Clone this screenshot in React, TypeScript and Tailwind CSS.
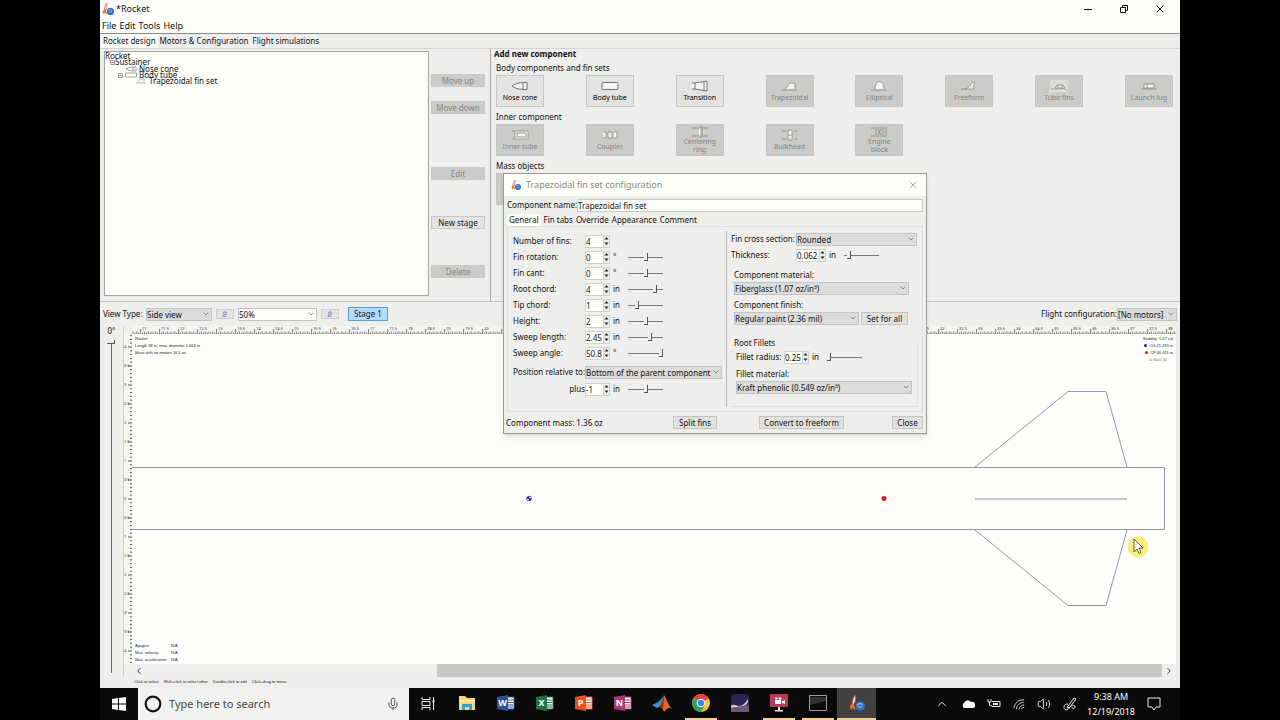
import React from 'react';
import { ChevronDown, ChevronLeft, ChevronRight, ChevronUp, Mic, Volume2, X } from 'lucide-react';

interface FieldProps {
  label: string;
  value: string;
  unit?: string;
  slider?: number;
  labelClass?: string;
  inputClass?: string;
}

interface DropDownProps {
  label: string;
  value: string;
  className?: string;
}

const finFields: FieldProps[] = [
  { label: 'Number of fins:', value: '4' },
  { label: 'Fin rotation:', value: '0', unit: '°', slider: 50 },
  { label: 'Fin cant:', value: '0', unit: '°', slider: 50 },
  { label: 'Root chord:', value: '4', unit: 'in', slider: 80 },
  { label: 'Tip chord:', value: '1', unit: 'in', slider: 22 },
  { label: 'Height:', value: '2', unit: 'in', slider: 50 },
  { label: 'Sweep length:', value: '2.45', unit: 'in', slider: 64 },
  { label: 'Sweep angle:', value: '50.8', unit: '°', slider: 100 },
];

function AppIcon({ className = '' }: { className?: string }) {
  return (
    <svg viewBox="0 0 20 20" className={className} aria-hidden="true">
      <path d="M8 0c1 4 0 8-2 12H4C4 7 5 3 8 0z" fill="#efe6e0" stroke="#c8452d" strokeWidth="1" />
      <path d="M4 10l-3 4 2 5 2-3 2 3 1-2-2-6z" fill="#e8742c" />
      <circle cx="14" cy="14" r="6" fill="#2d6fc0" />
      <path d="M10 13c2-3 6-3 7 0M11 15h6" stroke="#9cc8f2" strokeWidth="1.4" fill="none" />
    </svg>
  );
}

function DropDown({ label, value, className = '' }: DropDownProps) {
  return (
    <div className={`relative h-[13px] ${className}`}>
      <select
        aria-label={label}
        defaultValue={value}
        className="block h-full w-full appearance-none border border-[#c2c2c0] bg-inherit leading-[11px] outline-none"
      >
        <option>{value}</option>
      </select>
      <ChevronDown className="pointer-events-none absolute top-0.5 right-0.5 h-2 w-2 text-[#555]" strokeWidth={2} />
    </div>
  );
}

function Slider({ label, value }: { label: string; value: number }) {
  return (
    <input
      type="range"
      aria-label={`${label} slider`}
      defaultValue={value}
      className="h-3 w-[35px] appearance-none bg-transparent [&::-webkit-slider-runnable-track]:h-px [&::-webkit-slider-runnable-track]:bg-[#777] [&::-webkit-slider-thumb]:-mt-1 [&::-webkit-slider-thumb]:h-2 [&::-webkit-slider-thumb]:w-1 [&::-webkit-slider-thumb]:appearance-none [&::-webkit-slider-thumb]:border-r [&::-webkit-slider-thumb]:border-b [&::-webkit-slider-thumb]:border-[#555] [&::-webkit-slider-thumb]:bg-[#eeeeec]"
    />
  );
}

function NumberField({ label, value, unit, slider, labelClass = 'w-[72px]', inputClass = 'w-[18px]' }: FieldProps) {
  const id = label.toLowerCase().replace(/[^a-z]+/g, '-');
  return (
    <div className="flex h-4 items-center">
      <label htmlFor={id} className={`shrink-0 whitespace-nowrap ${labelClass}`}>{label}</label>
      <input id={id} defaultValue={value} className={`h-[13px] border border-r-0 border-[#d0d0ce] bg-[#fdfefa] outline-none ${inputClass}`} />
      <button aria-label={`${label} step`} className="flex h-[13px] w-[7px] items-center justify-center border border-[#d0d0ce]">
        <svg viewBox="0 0 5 10" className="h-2.5 w-[5px]">
          <path d="M.5 3.500l2-2.500 2 2.500zM.5 6.500l2 2.500 2-2.500z" fill="#222" />
        </svg>
      </button>
      <span className="w-[18px] shrink-0 pl-[3px]">{unit}</span>
      {slider !== undefined && <Slider label={label} value={slider} />}
    </div>
  );
}

/* Component palette */

const glyphs: Record<string, React.ReactNode> = {
  'Nose cone': <path d="M1 6c4-3 8-3.500 15-3.500v7C9 9.500 5 9 1 6zM12 2.500v7" />,
  'Body tube': <rect x="1" y="2.500" width="16" height="7" rx="1" />,
  Transition: <path d="M1 3h3l12-2v10L4 9H1M4 3v6M13 1.500v9" />,
  Trapezoidal: <path d="M1 10h15M4 10l5-7h5v6" />,
  Elliptical: <path d="M1 10h16M5 9c0-10 9-10 9 0" />,
  Freeform: <path d="M1 9h14M5 9c5-1 6-7 10-7l-2 5 1 2" />,
  'Tube fins': <path d="M1 9h14l2 2M5 8l2-3h6l2 3zM8 5v3M12 5v3" />,
  'Launch lug': <path d="M1 9h16M4 4h10v4H4zM7 4v4" />,
  'Inner tube': <path d="M4 2h13v8H4zM6 4h9v4H6zM1 2h2M1 10h2" />,
  Coupler: <path d="M2 3h3v6H2M7 3h4v6H7zM13 3h3v6h-3" />,
  'Centering ring': <path d="M1 2h16M1 10h16M8 1h3v10H8M10 3v6" />,
  Bulkhead: <path d="M1 2h4M1 10h4M13 2h4M13 10h4M7 1h4v10H7zM7 6h4" />,
  'Engine block': <path d="M1 2h16M1 10h16M8 3l3 6M11 3L8 9M13 3v6M16 3v6M6 3v6" />,
};

function PartButton({ name, enabled = false }: { name: string; enabled?: boolean }) {
  const twoLines = name.endsWith('ring') || name.endsWith('block');
  return (
    <button
      disabled={!enabled}
      className={`flex h-8 w-12 flex-col items-center justify-center border border-[#c4c4c2] text-[7px] leading-[8px] ${
        enabled ? 'bg-[#e3e3e1] text-black' : 'bg-[#cbcbc9] text-[#858583]'
      } ${twoLines ? 'px-2' : ''}`}
    >
      <svg
        viewBox="0 0 18 12"
        className={`shrink-0 ${twoLines ? 'h-3 w-[18px]' : 'mb-0.5 h-3 w-[18px]'} ${name === 'Tube fins' ? 'bg-[#dcdcda]' : ''}`}
        fill="#f4f4f2"
        stroke={enabled ? '#555' : '#858583'}
        strokeWidth="0.800"
      >
        {glyphs[name]}
      </svg>
      {name}
    </button>
  );
}

const partGrid = 'grid grid-cols-[repeat(8,48px)] justify-between';

function ComponentPalette() {
  return (
    <section className="flex min-w-0 flex-1 flex-col border-l border-[#a5a5a3] pr-[7px] pl-[5px]">
      <h2 className="-ml-0.5 h-3 leading-[10px] font-bold">Add new component</h2>
      <h3 className="mt-px h-[13px] leading-[12px]">Body components and fin sets</h3>
      <div className={partGrid}>
        {['Nose cone', 'Body tube', 'Transition'].map(n => <PartButton key={n} name={n} enabled />)}
        {['Trapezoidal', 'Elliptical', 'Freeform', 'Tube fins', 'Launch lug'].map(n => <PartButton key={n} name={n} />)}
      </div>
      <h3 className="mt-1 h-[13px] leading-[12px]">Inner component</h3>
      <div className={partGrid}>
        {['Inner tube', 'Coupler', 'Centering ring', 'Bulkhead', 'Engine block'].map(n => <PartButton key={n} name={n} />)}
      </div>
      <h3 className="mt-1 h-[13px] leading-[12px]">Mass objects</h3>
      <button disabled aria-label="Mass component" className="h-8 w-12 border border-[#c4c4c2] bg-[#cbcbc9]" />
    </section>
  );
}

function ComponentTree() {
  return (
    <ul className="min-w-0 flex-1 border border-[#a5a5a3] bg-[#fdfefa] pt-px leading-[6px] whitespace-nowrap">
      <li className="h-1.5">Rocket</li>
      <li className="flex h-1.5 items-center pl-[5px]">
        <TreeBox />Sustainer
      </li>
      <li className="flex h-[7px] items-center gap-0.5 pl-5">
        <svg viewBox="0 0 12 6" className="h-1.5 w-3" fill="none" stroke="#888" strokeWidth="0.800"><path d="M1 3c3-2 6-2 10-2v4C7 5 4 5 1 3zM8 1v4" /></svg>
        Nose cone
      </li>
      <li className="flex h-1.5 items-center gap-0.5 pl-[13px]">
        <TreeBox />
        <svg viewBox="0 0 12 6" className="h-1.5 w-3" fill="none" stroke="#888" strokeWidth="0.800"><path d="M.5 1h11v4H.5z" /></svg>
        Body tube
      </li>
      <li className="flex h-1.5 items-center gap-0.5 pl-[30px]">
        <svg viewBox="0 0 12 6" className="h-1.5 w-3" fill="none" stroke="#aaa" strokeWidth="0.800"><path d="M1 5h10M3 5l2-4h4v4" /></svg>
        Trapezoidal fin set
      </li>
    </ul>
  );
}

function TreeBox() {
  return (
    <svg viewBox="0 0 5 5" className="h-[5px] w-[5px] shrink-0" fill="none" stroke="#888" strokeWidth="0.800"><path d="M.5.5h4v4h-4zM1 2.500h3" /></svg>
  );
}

const sideButton = 'h-[13px] w-[54px] border border-[#c8c8c6] leading-[11px] disabled:bg-[#cbcbc9] disabled:text-[#858583]';

/* Rocket drawing */

const PX_PER_INCH = 38;

function TopRuler() {
  return (
    <svg viewBox="0 0 1044 8" preserveAspectRatio="xMinYMin slice" className="h-2 w-full shrink-0 bg-[#f4f4f1]">
      {Array.from({ length: 556 }, (_, i) => {
        const x = 1 + (i / 20) * PX_PER_INCH;
        const major = i % 10 === 4;
        return <path key={i} d={`M${x} 8V${major ? 3 : i % 2 ? 6.5 : 5.5}`} stroke="#444" strokeWidth="0.700" />;
      })}
      {Array.from({ length: 55 }, (_, i) => (
        <text key={i} x={10 + i * 19} y="4" fontSize="4" fill="#333">{11 + i / 2}</text>
      ))}
    </svg>
  );
}

function SideRuler() {
  return (
    <svg viewBox="0 0 8 330" preserveAspectRatio="xMinYMin slice" className="h-full w-2 shrink-0 bg-[#f4f4f1]">
      {Array.from({ length: 87 }, (_, i) => (
        <path key={i} d={`M8 ${1.6 + i * 3.8}H${i % 5 === 3 ? 4 : 6}`} stroke="#333" strokeWidth="0.800" />
      ))}
      {Array.from({ length: 17 }, (_, i) => (
        <text key={i} x="0" y={14 + i * 19} fontSize="4" fill="#333">{Math.abs(4 - i / 2)}</text>
      ))}
    </svg>
  );
}

function RocketCanvas() {
  return (
    <div className="relative min-w-0 flex-1 bg-[#fdfefa] font-['Liberation_Sans',sans-serif] text-[4px] leading-[7px]">
      <svg viewBox="0 0 1044 330" preserveAspectRatio="xMinYMid meet" className="block h-full w-full" fill="none" stroke="#9494b8">
        <path d="M0 133.500H1032.500V195.500H0" />
        <path d="M843 133L936 57.500H974L995 133M843 196L936 271.500H974L995 196M843 165H995" />
        <circle cx="397" cy="164.500" r="2.500" fill="#1818b0" stroke="none" />
        <path d="M397 162a2.500 2.500 0 0 1 2.500 2.500H397zM397 167a2.500 2.500 0 0 1-2.500-2.500h2.500z" fill="#fff" stroke="#1818b0" strokeWidth="0.500" />
        <circle cx="752" cy="164.500" r="2.300" fill="#d81818" stroke="#d81818" strokeWidth="0.500" />
        <circle cx="1006" cy="213" r="10.500" fill="#f5ef7c" stroke="none" />
        <path d="M1002 205v13l3-3 2 4.500 2-1-2-4.500h4z" fill="#fff" stroke="#333" strokeWidth="0.800" />
      </svg>
      <div className="absolute top-px left-[3px] text-[#222]">
        <p>Rocket</p>
        <p>Length 38 in, max. diameter 1.664 in</p>
        <p>Mass with no motors 16.5 oz</p>
      </div>
      <div className="absolute top-px right-[3px] text-right text-[#222]">
        <p>Stability: 5.67 cal</p>
        <p><span className="mr-0.5 inline-block h-[3px] w-[3px] rounded-full bg-[#1818b0]" />CG:21.233 in</p>
        <p><span className="mr-0.5 inline-block h-[3px] w-[3px] rounded-full bg-[#d81818]" />CP:30.611 in</p>
        <p className="pr-1.5 text-[#777]">at M=0.30</p>
      </div>
      <dl className="absolute bottom-px left-[3px] grid grid-cols-[36px_auto] text-[#202060]">
        <dt>Apogee:</dt><dd>N/A</dd>
        <dt>Max. velocity:</dt><dd>N/A</dd>
        <dt className="whitespace-nowrap">Max. acceleration:</dt><dd>N/A</dd>
      </dl>
    </div>
  );
}

function ZoomButton({ label }: { label: string }) {
  return (
    <button aria-label={label} className="mx-1 flex h-2.5 w-[18px] items-center justify-center border border-[#d0d0ce] bg-[#e3e3e1]">
      <svg viewBox="0 0 8 8" className="h-1.5 w-1.5" fill="#cfd6f2" stroke="#6a6fa8"><circle cx="4" cy="3" r="2" /><path d="M3 5L1 7h5" /></svg>
    </button>
  );
}

function RocketView() {
  return (
    <main className="flex min-h-0 flex-1 flex-col border-t border-[#c4c4c2]">
      <div className="flex h-6 shrink-0 items-center px-[3px]">
        <span className="w-[43px]">View Type:</span>
        <DropDown label="View type" value="Side view" className="w-[66px] bg-[#dcdcda]" />
        <ZoomButton label="Zoom out" />
        <DropDown label="Zoom" value="50%" className="w-[79px] bg-[#fdfefa]" />
        <ZoomButton label="Zoom in" />
        <button className="ml-[5px] h-3.5 w-10 border border-[#5f9fd0] bg-[#b4dcfa] leading-[12px]">Stage 1</button>
        <span className="ml-auto">Flight configuration:</span>
        <DropDown label="Flight configuration" value="[No motors]" className="w-[60px] bg-[#dcdcda]" />
      </div>
      <div className="flex min-h-0 flex-1">
        <div className="flex w-[23px] shrink-0 flex-col items-center pb-1">
          <label htmlFor="roll" className="h-3.5 leading-[10px]">0°</label>
          <input
            id="roll"
            type="range"
            defaultValue={0}
            className="min-h-0 w-3 flex-1 appearance-none bg-transparent [writing-mode:vertical-lr] [&::-webkit-slider-runnable-track]:w-px [&::-webkit-slider-runnable-track]:bg-[#666] [&::-webkit-slider-thumb]:-ml-1 [&::-webkit-slider-thumb]:h-1 [&::-webkit-slider-thumb]:w-2 [&::-webkit-slider-thumb]:appearance-none [&::-webkit-slider-thumb]:border-r [&::-webkit-slider-thumb]:border-b [&::-webkit-slider-thumb]:border-[#555] [&::-webkit-slider-thumb]:bg-[#eeeeec]"
          />
        </div>
        <div className="mr-1 flex min-w-0 flex-1 flex-col border-l border-[#d0d0ce]">
          <div className="pl-2"><TopRuler /></div>
          <div className="flex min-h-0 flex-1">
            <SideRuler />
            <RocketCanvas />
          </div>
          <div className="flex h-[13px] shrink-0 items-center bg-[#efefed] pl-2.5">
            <button aria-label="Scroll left"><ChevronLeft className="h-2.5 w-2.5" /></button>
            <div className="h-full flex-1 pl-[293px]"><div className="h-full bg-[#c8c8c6]" /></div>
            <button aria-label="Scroll right" className="px-0.5"><ChevronRight className="h-2.5 w-2.5" /></button>
          </div>
        </div>
      </div>
      <div className="flex h-[11px] shrink-0 gap-[5px] pl-[34px] font-['Liberation_Sans',sans-serif] text-[4px] leading-[9px] text-[#222]">
        <span>Click to select</span>
        <span>Shift+click to select other</span>
        <span>Double-click to edit</span>
        <span>Click+drag to move</span>
      </div>
    </main>
  );
}

/* Fin set dialog */

const dialogButton = 'h-[13px] border border-[#c4c4c2] bg-[#e1e1df] text-center leading-[11px]';

function FinDialog() {
  return (
    <div role="dialog" aria-labelledby="fin-title" className="absolute top-[173px] left-[403px] w-[424px] border border-[#9a9a98] bg-[#eeeeec] shadow-md">
      <header className="flex h-[22px] items-center bg-[#fdfefa] pr-[7px] pl-[7px] text-[#8a8a88]">
        <AppIcon className="h-2.5 w-2.5" />
        <h2 id="fin-title" className="ml-[5px] flex-1 text-[9px]">Trapezoidal fin set configuration</h2>
        <button aria-label="Close dialog"><X className="h-3 w-3" strokeWidth={1.5} /></button>
      </header>
      <div className="flex h-[18px] items-center px-[3px]">
        <label htmlFor="component-name" className="w-[70px] whitespace-nowrap">Component name:</label>
        <input id="component-name" defaultValue="Trapezoidal fin set" className="h-[13px] min-w-0 flex-1 border border-[#c8c8c6] bg-[#fdfefa] outline-none" />
      </div>
      <nav className="ml-[3px] flex h-3 items-center gap-[3px] leading-[12px]">
        <button className="bg-[#fdfefa] px-0.5">General</button>
        <button>Fin tabs</button>
        <button>Override</button>
        <button>Appearance</button>
        <button>Comment</button>
      </nav>
      <div className="mx-[3px] flex h-[186px] border border-[#dededc]">
        <div className="w-[218px] shrink-0 pt-1.5 pl-[5px]">
          {finFields.map(f => <NumberField key={f.label} {...f} />)}
          <div className="mt-0.5 flex h-[18px] items-center">
            <span className="w-[72px] whitespace-nowrap">Position relative to:</span>
            <DropDown label="Position relative to" value="Bottom of the parent component" className="w-[137px] bg-[#dcdcda]" />
          </div>
          <NumberField label="plus" value="-1" unit="in" slider={50} labelClass="w-[72px] text-right" />
        </div>
        <div className="my-1 flex min-w-0 flex-1 flex-col border-l border-[#b4b4b2] pl-1">
          <div className="flex h-4 items-center">
            <span className="w-[65px] whitespace-nowrap">Fin cross section:</span>
            <DropDown label="Fin cross section" value="Rounded" className="w-[121px] bg-[#dcdcda]" />
          </div>
          <NumberField label="Thickness:" value="0.062" unit="in" slider={10} labelClass="w-[65px]" inputClass="w-[23px]" />
          <div className="mt-1.5 pl-[3px]">
            <p className="h-3 leading-[12px]">Component material:</p>
            <DropDown label="Component material" value="Fiberglass (1.07 oz/in³)" className="mt-px w-[175px] bg-[#dcdcda]" />
            <p className="mt-1 h-3 leading-[12px]">Component finish:</p>
            <div className="mt-px flex gap-0.5">
              <DropDown label="Component finish" value="Regular paint (2.36 mil)" className="w-[125px] bg-[#dcdcda]" />
              <button className={`w-[47px] ${dialogButton}`}>Set for all</button>
            </div>
          </div>
          <fieldset className="mt-3 mr-1 flex-1 border-r border-b border-[#e0e0de] pl-[5px]">
            <legend className="-ml-0.5 h-3 leading-[12px]">Root Fillets</legend>
            <NumberField label="Fillet radius:" value="0.25" unit="in" slider={0} labelClass="w-[48px]" />
            <p className="mt-[3px] h-3 leading-[12px]">Fillet material:</p>
            <DropDown label="Fillet material" value="Kraft phenolic (0.549 oz/in³)" className="mt-px w-[176px] bg-[#dcdcda]" />
          </fieldset>
        </div>
      </div>
      <footer className="flex h-[21px] items-center pr-[3px] pl-0.5">
        <span className="w-[167px]">Component mass: 1.36 oz</span>
        <button className={`w-11 ${dialogButton}`}>Split fins</button>
        <button className={`ml-[42px] w-[85px] ${dialogButton}`}>Convert to freeform</button>
        <button className={`ml-auto w-[31px] ${dialogButton}`}>Close</button>
      </footer>
    </div>
  );
}

/* Taskbar */

function OfficeIcon({ letter, color }: { letter: string; color: string }) {
  return (
    <svg viewBox="0 0 18 16" className="h-4 w-[18px]">
      <path d="M9 2h8v12H9z" fill="#fff" stroke={color} strokeWidth="1" />
      <path d="M11 5h5M11 7.500h5M11 10h5M11 12h5" stroke={color} />
      <path d="M0 2l11-2v16L0 14z" fill={color} />
      <text x="5.500" y="11" fontSize="9" fontWeight="bold" fill="#fff" textAnchor="middle">{letter}</text>
    </svg>
  );
}

const taskIcons: { name: string; icon: React.ReactNode; open?: boolean; active?: boolean }[] = [
  {
    name: 'Task view',
    icon: <svg viewBox="0 0 14 14" className="h-3.5 w-3.5" fill="none" stroke="#eee"><path d="M1 1v2.500h8V1M1 5.500h8v4H1zM1 14v-2.500h8V14M12.500 1v13" /><path d="M11.500 4.500h2v2h-2z" fill="#eee" stroke="none" /></svg>,
  },
  {
    name: 'File Explorer',
    icon: <svg viewBox="0 0 18 16" className="h-4 w-[18px]"><path d="M1 1h6l2 2h8v12H1z" fill="#f7d978" /><path d="M1 5h16v2H1z" fill="#fbe9a5" /><path d="M4 15V9h10v6h-3v-3H7v3z" fill="#2fa3dc" /></svg>,
  },
  { name: 'Word', icon: <OfficeIcon letter="W" color="#2a5699" /> },
  { name: 'Excel', icon: <OfficeIcon letter="X" color="#1f7346" /> },
  { name: 'PowerPoint', icon: <OfficeIcon letter="P" color="#e8501e" /> },
  { name: 'OneNote', icon: <OfficeIcon letter="N" color="#a83a70" /> },
  {
    name: 'MATLAB',
    icon: <svg viewBox="0 0 20 18" className="h-[18px] w-5"><path d="M0 11l6-3 4-4 2-3-3 11-4 2z" fill="#3d8fc4" /><path d="M12 1c3 4 4 10 8 14-3-2-5-1-8 3-1-3-2-5-5-5 3-3 4-7 5-12z" fill="#e0662a" /><path d="M12 1c0 6-1 11-1 15-1-2-2-3-4-3 3-3 4-7 5-12z" fill="#8c2d1a" /></svg>,
  },
  {
    name: 'Chrome',
    open: true,
    icon: <svg viewBox="0 0 18 18" className="h-[18px] w-[18px]"><circle cx="9" cy="9" r="9" fill="#fbc62e" /><path d="M9 9L1.200 4.500a9 9 0 0 1 15.600 0z" fill="#dd4a3b" /><path d="M9 9L1.200 4.500A9 9 0 0 0 9 18l4-7z" fill="#2ea35a" /><circle cx="9" cy="9" r="4.300" fill="#fff" /><circle cx="9" cy="9" r="3.300" fill="#4486f0" /></svg>,
  },
  {
    name: 'Eclipse',
    icon: <svg viewBox="0 0 18 18" className="h-[18px] w-[18px]"><rect width="18" height="18" rx="2" fill="#2b2350" /><path d="M0 12c4-3 6 1 9 0 4-1 6-4 8-7 1 7-5 8-17 9z" fill="#d8bfe0" /><path d="M0 14l18-3v7H0z" fill="#6d5878" /></svg>,
  },
  {
    name: 'Screen recorder',
    open: true,
    icon: <svg viewBox="0 0 18 18" className="h-[18px] w-[18px]"><rect width="18" height="13" rx="1" fill="#b83a58" /><path d="M5 6h6v4H5zM12 7l3-1v4l-3-1z" fill="#fff" /><circle cx="6.500" cy="4.500" r="1.300" fill="#fff" /><circle cx="10" cy="4.500" r="1.300" fill="#fff" /><path d="M8 13h2v3H8zM5 16h8v1.500H5z" fill="#eee" /></svg>,
  },
  {
    name: 'Command prompt',
    open: true,
    icon: <svg viewBox="0 0 18 16" className="h-4 w-[18px]"><path d="M.5.5h17v15H.5z" fill="#0a0a0a" stroke="#999" /><path d="M1 2h16v4L1 10z" fill="#333" /></svg>,
  },
  { name: 'OpenRocket', open: true, active: true, icon: <AppIcon className="h-4 w-4" /> },
];

function Taskbar() {
  return (
    <footer className="flex h-8 shrink-0 bg-[#0a0a0a] text-white">
      <button aria-label="Start" className="flex w-[38px] items-center justify-center">
        <svg viewBox="0 0 14 14" className="h-3.5 w-3.5" fill="#fff"><path d="M0 2l6-1v5.600H0zM7 .9L14 0v6.600H7zM0 7.400h6V13l-6-1zM7 7.400h7V14l-7-.9z" /></svg>
      </button>
      <div className="flex w-[271px] items-center bg-[#f2f2f0] pr-[9px] pl-1.5 text-[#444]">
        <svg viewBox="0 0 18 18" className="h-[18px] w-[18px]"><circle cx="9" cy="9" r="7.300" fill="none" stroke="#111" strokeWidth="2.200" /></svg>
        <input aria-label="Search" placeholder="Type here to search" className="ml-[7px] min-w-0 flex-1 bg-transparent text-[11px] outline-none placeholder:text-[#444]" />
        <Mic className="h-3.5 w-3.5" strokeWidth={1.5} />
      </div>
      <div className="-ml-px flex">
        {taskIcons.map(t => (
          <button
            key={t.name}
            aria-label={t.name}
            className={`flex h-full w-[39px] flex-col items-center justify-between ${t.active ? 'bg-[#414141]' : ''}`}
          >
            <span className="flex flex-1 items-center">{t.icon}</span>
            <span className={`h-0.5 ${t.active ? 'w-full' : 'w-8'} ${t.open ? 'bg-[#f2cf92]' : ''}`} />
          </button>
        ))}
      </div>
      <div className="ml-auto flex items-center gap-3 pr-[19px]">
        <ChevronUp className="h-3.5 w-3.5" strokeWidth={1.5} />
        <svg viewBox="0 0 14 10" className="h-2.5 w-3.5" fill="#fff"><path d="M3 9a3 3 0 0 1 0-5 4 4 0 0 1 7-1 3 3 0 0 1 2 6z" /></svg>
        <svg viewBox="0 0 14 10" className="h-2.5 w-3.5" fill="none" stroke="#fff"><path d="M5 2.500h8v5H4.500M1 0v3h3V0M2.500 3v3.500h2" strokeWidth="0.900" /><path d="M6 4h5v2H6z" fill="#fff" stroke="none" /></svg>
        <svg viewBox="0 0 14 14" className="h-3 w-3" fill="none" stroke="#eee"><path d="M1 12C2 6 6 2 13 2M4 13c0-4 4-8 9-8M7 13c0-2 3-5 6-5M10 13c0-1 1-2 3-2" /></svg>
        <Volume2 className="h-3.5 w-3.5" strokeWidth={1.5} />
        <svg viewBox="0 0 14 14" className="h-3.5 w-3.5" fill="none" stroke="#eee"><path d="M5 9l6-8 2 1-6 8-3 1zM5 7c-5 0-5 5-2 6 3 0 3-3 5-4s4-1 4 1-3 2-3 0" /></svg>
        <div className="-ml-0.5 text-center text-[9px] leading-[15px] whitespace-nowrap">
          <p>9:38 AM</p>
          <p>12/19/2018</p>
        </div>
        <svg viewBox="0 0 14 14" className="h-3.5 w-3.5" fill="none" stroke="#eee"><path d="M1 1h12v9H9l-2 3-2-3H1z" /></svg>
      </div>
    </footer>
  );
}

export default function App() {
  return (
    <div className="h-screen overflow-hidden bg-black px-[100px]">
      <div className="relative flex h-full flex-col bg-[#eeeeec] font-['Noto_Sans',sans-serif] text-[8px] text-[#111]">
        <header className="flex h-[18px] shrink-0 items-center bg-[#fdfefa] pr-0.5 pl-0.5 text-[9px]">
          <AppIcon className="h-3 w-3" />
          <h1 className="ml-0.5 flex-1">*Rocket</h1>
          <button aria-label="Minimize" className="flex w-9 justify-center"><span className="h-px w-2 bg-black" /></button>
          <button aria-label="Restore" className="flex w-9 justify-center">
            <svg viewBox="0 0 10 10" className="h-2.5 w-2.5" fill="none" stroke="#111"><path d="M1.500 3.500h5v5h-5zM3.500 3V1.500h5v5H7" /></svg>
          </button>
          <button aria-label="Close" className="flex w-9 justify-center"><X className="h-3 w-3" strokeWidth={2} /></button>
        </header>
        <nav className="flex h-[15px] shrink-0 items-center gap-[3px] bg-[#fdfefa] pl-0.5 text-[9px]">
          <button>File</button>
          <button>Edit</button>
          <button>Tools</button>
          <button>Help</button>
        </nav>
        <nav className="flex h-[15px] shrink-0 items-center gap-1 border-t border-[#8a8a88] pl-px">
          <button className="h-full bg-[#fdfefa] px-0.5">Rocket design</button>
          <button className="-ml-0.5">Motors &amp; Configuration</button>
          <button>Flight simulations</button>
        </nav>
        <div className="flex h-[253px] shrink-0 border-t border-[#d4d4d2]">
          <div className="flex w-[390px] shrink-0 pt-0.5 pb-[5px] pl-1">
            <ComponentTree />
            <div className="mr-[5px] ml-0.5 flex flex-col">
              <button disabled className={`mt-[23px] ${sideButton}`}>Move up</button>
              <button disabled className={`mt-3.5 ${sideButton}`}>Move down</button>
              <button disabled className={`mt-[53px] ${sideButton}`}>Edit</button>
              <button className={`mt-9 bg-[#e3e3e1] ${sideButton}`}>New stage</button>
              <button disabled className={`mt-9 ${sideButton}`}>Delete</button>
            </div>
          </div>
          <ComponentPalette />
        </div>
        <RocketView />
        <Taskbar />
        <FinDialog />
      </div>
    </div>
  );
}
